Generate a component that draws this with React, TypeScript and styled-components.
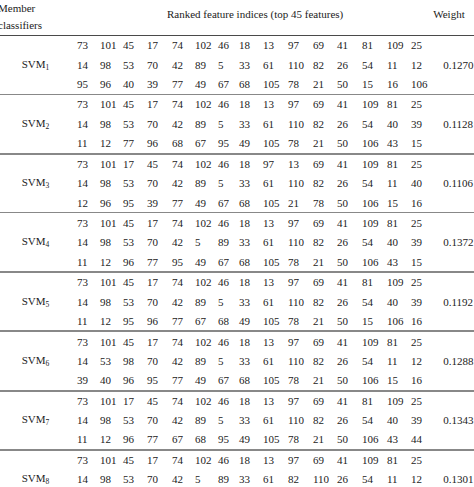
import styled, { createGlobalStyle } from "styled-components";

const GlobalStyle = createGlobalStyle`
  html, body {
    margin: 0;
    padding: 0;
    background: #ffffff;
    overflow: hidden;
  }
`;

const Page = styled.div`
  width: 474px;
  height: 487px;
  overflow: hidden;
  background: #fff;
`;

const Table = styled.table`
  border-collapse: collapse;
  table-layout: fixed;
  width: 530px;
  margin-left: -2px;
  font-family: "Liberation Serif", "Times New Roman", serif;
  font-size: 11px;
  color: #222;
`;

const HeadRow = styled.tr`
  height: 33px;
  border-bottom: 1.5px solid #4a4a4a;
`;

const LabelHead = styled.th`
  font-weight: normal;
  text-align: left;
  vertical-align: bottom;
  line-height: 17px;
  padding: 0 0 0.5px 0;
`;

const TitleHead = styled.th<{ $align?: string }>`
  font-weight: normal;
  text-align: ${(p) => p.$align || "center"};
  vertical-align: top;
  line-height: 17px;
  padding: 6px 0 0 0;
  white-space: nowrap;
`;

const Group = styled.tbody<{ $rule: number }>`
  border-bottom: ${(p) => p.$rule}px solid #888;
`;

const Row = styled.tr`
  height: 19.75px;
`;

const LabelCell = styled.td`
  text-align: center;
  vertical-align: middle;
  padding: 0 4px 0 0;
  white-space: nowrap;

  sub {
    font-size: 7.5px;
    vertical-align: -2px;
  }
`;

const NumCell = styled.td`
  text-align: left;
  padding: 0;
  white-space: nowrap;
`;

const WeightCell = styled.td`
  text-align: left;
  vertical-align: middle;
  padding: 0 0 0 10px;
`;

const colWidths = [79, 23, 23, 24, 25, 23, 23, 21, 24, 25, 25, 24, 25, 25, 24, 22, 96];

type Classifier = {
  id: number;
  rows: number[][];
  weight: string;
  rule: number;
};

const data: Classifier[] = [
  {
    id: 1,
    rows: [
      [73, 101, 45, 17, 74, 102, 46, 18, 13, 97, 69, 41, 81, 109, 25],
      [14, 98, 53, 70, 42, 89, 5, 33, 61, 110, 82, 26, 54, 11, 12],
      [95, 96, 40, 39, 77, 49, 67, 68, 105, 78, 21, 50, 15, 16, 106],
    ],
    weight: "0.1270",
    rule: 1,
  },
  {
    id: 2,
    rows: [
      [73, 101, 45, 17, 74, 102, 46, 18, 13, 97, 69, 41, 109, 81, 25],
      [14, 98, 53, 70, 42, 89, 5, 33, 61, 110, 82, 26, 54, 40, 39],
      [11, 12, 77, 96, 68, 67, 95, 49, 105, 78, 21, 50, 106, 43, 15],
    ],
    weight: "0.1128",
    rule: 2,
  },
  {
    id: 3,
    rows: [
      [73, 101, 17, 45, 74, 102, 46, 18, 97, 13, 69, 41, 109, 81, 25],
      [14, 98, 53, 70, 42, 89, 5, 33, 61, 110, 82, 26, 54, 11, 40],
      [12, 96, 95, 39, 77, 49, 67, 68, 105, 21, 78, 50, 106, 15, 16],
    ],
    weight: "0.1106",
    rule: 1,
  },
  {
    id: 4,
    rows: [
      [73, 101, 45, 17, 74, 102, 46, 18, 13, 97, 69, 41, 109, 81, 25],
      [14, 98, 53, 70, 42, 5, 89, 33, 61, 110, 82, 26, 54, 40, 39],
      [11, 12, 96, 77, 95, 49, 67, 68, 105, 78, 21, 50, 106, 43, 15],
    ],
    weight: "0.1372",
    rule: 2,
  },
  {
    id: 5,
    rows: [
      [73, 101, 45, 17, 74, 102, 46, 18, 13, 97, 69, 41, 81, 109, 25],
      [14, 98, 53, 70, 42, 89, 5, 33, 61, 110, 82, 26, 54, 40, 39],
      [11, 12, 95, 96, 77, 67, 68, 49, 105, 78, 21, 50, 15, 106, 16],
    ],
    weight: "0.1192",
    rule: 2,
  },
  {
    id: 6,
    rows: [
      [73, 101, 45, 17, 74, 102, 46, 18, 13, 97, 69, 41, 109, 81, 25],
      [14, 53, 98, 70, 42, 89, 5, 33, 61, 110, 82, 26, 54, 11, 12],
      [39, 40, 96, 95, 77, 49, 67, 68, 105, 78, 21, 50, 106, 15, 16],
    ],
    weight: "0.1288",
    rule: 2,
  },
  {
    id: 7,
    rows: [
      [73, 101, 17, 45, 74, 102, 46, 18, 13, 97, 69, 41, 81, 109, 25],
      [14, 98, 53, 70, 42, 89, 5, 33, 61, 110, 82, 26, 54, 40, 39],
      [11, 12, 96, 77, 67, 68, 95, 49, 105, 78, 21, 50, 106, 43, 44],
    ],
    weight: "0.1343",
    rule: 2,
  },
  {
    id: 8,
    rows: [
      [73, 101, 45, 17, 74, 102, 46, 18, 13, 97, 69, 41, 109, 81, 25],
      [14, 98, 53, 70, 42, 5, 89, 33, 61, 82, 110, 26, 54, 11, 12],
      [11, 12, 96, 77, 95, 49, 67, 68, 105, 78, 21, 50, 106, 43, 15],
    ],
    weight: "0.1301",
    rule: 2,
  },
];

const App = () => {
  return (
    <Page>
      <GlobalStyle />
      <Table>
        <colgroup>
          {colWidths.map((w, i) => (
            <col key={i} style={{ width: w }} />
          ))}
        </colgroup>
        <thead>
          <HeadRow>
            <LabelHead>
              Member
              <br />
              classifiers
            </LabelHead>
            <TitleHead colSpan={15}>Ranked feature indices (top 45 features)</TitleHead>
            <TitleHead $align="left">Weight</TitleHead>
          </HeadRow>
        </thead>
        {data.map((c) => (
          <Group key={c.id} $rule={c.rule}>
            {c.rows.map((r, ri) => (
              <Row key={ri}>
                {ri === 0 && (
                  <LabelCell rowSpan={3}>
                    SVM<sub>{c.id}</sub>
                  </LabelCell>
                )}
                {r.map((n, ni) => (
                  <NumCell key={ni}>{n}</NumCell>
                ))}
                {ri === 0 && <WeightCell rowSpan={3}>{c.weight}</WeightCell>}
              </Row>
            ))}
          </Group>
        ))}
      </Table>
    </Page>
  );
};

export default App;
